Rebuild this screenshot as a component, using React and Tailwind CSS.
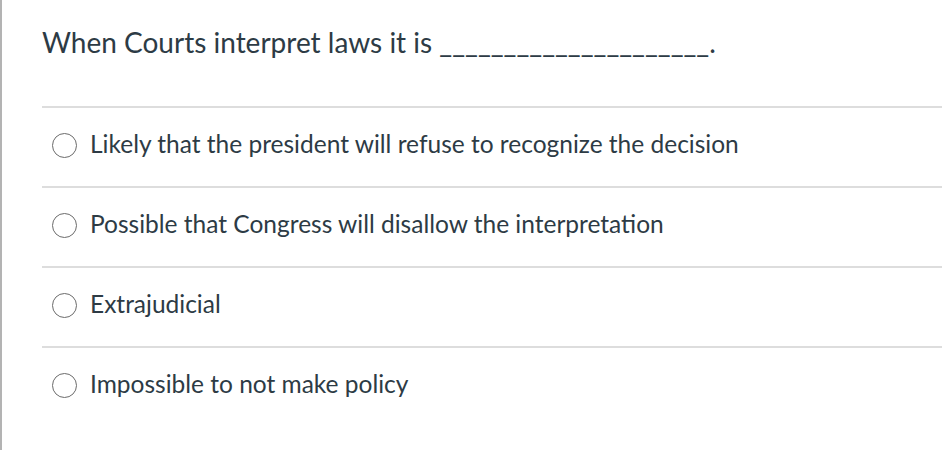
const OPTIONS = [
  'Likely that the president will refuse to recognize the decision',
  'Possible that Congress will disallow the interpretation',
  'Extrajudicial',
  'Impossible to not make policy',
]

export default function App() {
  return (
    <div
      className="h-[450px] w-[942px] overflow-hidden bg-white border-l-2 border-[#b3b3b3] text-[#2d3b45]"
      style={{ fontFamily: 'Lato, "Open Sans", sans-serif' }}
    >
      <div className="pl-[40px]">
        <div className="h-[106px] pt-[25px] text-[28px] leading-[34px]">
          When Courts interpret laws it is _____________________.
        </div>
        {OPTIONS.map((opt) => (
          <div key={opt} className="flex h-[80px] items-center border-t-2 border-[#dddddd] pb-[3px] pl-[10px]">
            <span className="mr-[13px] h-[25px] w-[25px] shrink-0 rounded-full border-[1.5px] border-[#6b6b6b]" />
            <span className="mb-[5px] text-[24.5px] leading-[29px]">{opt}</span>
          </div>
        ))}
      </div>
    </div>
  )
}
